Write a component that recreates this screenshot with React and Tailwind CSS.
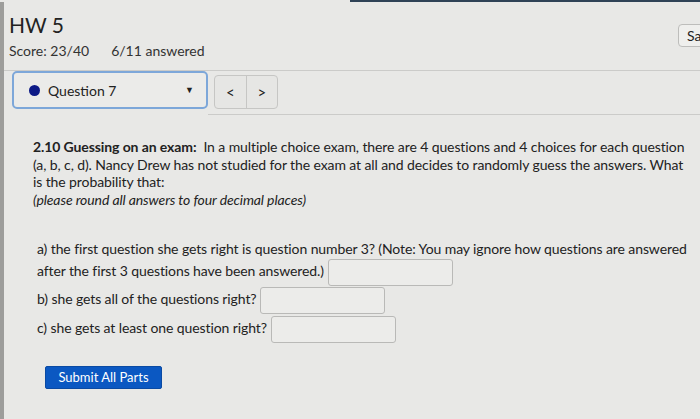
import React from "react";

const Blank = () => (
  <span className="inline-block w-[125px] h-[27px] align-middle ml-[4px] bg-[#ececea] border border-[#b9b9b7] rounded-[3px]" />
);

export default function App() {
  return (
    <div className="w-[700px] h-[419px] overflow-hidden bg-[#e8e8e6] text-[#222] font-['Lato',sans-serif]">
      <div className="flex h-[2px]">
        <div className="w-[350px]" />
        <div className="flex-1 bg-[#2f4256]" />
      </div>
      <div className="h-[417px] border-l-[4px] border-[#9d9d9b] flex flex-col">
        {/* header */}
        <div className="flex justify-between pl-[5px] pt-[12px]">
          <div>
            <div className="text-[21px] leading-[22px]">HW 5</div>
            <div className="mt-[6px] text-[14px] leading-[18px] text-[#333]">
              Score: 23/40
              <span className="ml-[22px]">6/11 answered</span>
            </div>
          </div>
          <div className="mt-[10px] mr-[-22px] h-[23px] w-[44px] pl-[8px] text-[14px] leading-[21px] bg-[#efefed] border border-[#bdbdbb] rounded-[4px]">
            Save
          </div>
        </div>

        {/* question nav */}
        <div className="mt-[10px] flex border-t border-[#cbcbc9] h-[45px]">
          <div className="ml-[8px] w-[196px] h-[38px] border-2 border-[#7da7d9] rounded-[5px] bg-[#ebebe9] flex items-center pl-[15px] pr-[12px]">
            <span className="w-[11px] h-[11px] rounded-full bg-[#0d1a86]" />
            <span className="ml-[8px] text-[14px]">Question 7</span>
            <span className="ml-auto text-[9px] text-[#222]">▼</span>
          </div>
          <div className="flex-1 border-b border-[#cbcbc9] pl-[6px] pt-[4px]">
            <div className="flex w-[64px] h-[34px] border border-[#c6c6c4] rounded-[4px] bg-[#e6e6e4]">
              <div className="flex-1 flex items-center justify-center border-r border-[#c6c6c4] text-[15px]">
                &lt;
              </div>
              <div className="flex-1 flex items-center justify-center text-[15px]">
                &gt;
              </div>
            </div>
          </div>
        </div>

        {/* problem */}
        <div className="pl-[29px] pr-[12px] pt-[23px] text-[14px] tracking-[-0.1px] leading-[17.5px]">
          <p>
            <b className="font-bold">2.10 Guessing on an exam:</b>&nbsp; In a multiple choice
            exam, there are 4 questions and 4 choices for each question (a, b, c, d). Nancy Drew
            has not studied for the exam at all and decides to randomly guess the answers. What
            is the probability that:
          </p>
          <p className="italic">(please round all answers to four decimal places)</p>

          <div className="pl-[4px] mt-[30px] leading-[21px]">
            <p>
              a) the first question she gets right is question number 3? (Note: You may ignore
              how questions are answered after the first 3 questions have been answered.)
              <Blank />
            </p>
            <p className="mt-[1px]">
              b) she gets all of the questions right?
              <Blank />
            </p>
            <p className="mt-[2px]">
              c) she gets at least one question right?
              <Blank />
            </p>
          </div>

          <button className="mt-[23px] ml-[12px] w-[117px] h-[23px] bg-[#0b58c2] text-white text-[13px] tracking-normal rounded-[2px] border border-[#0a4aa3]">
            Submit All Parts
          </button>
        </div>
      </div>
    </div>
  );
}
